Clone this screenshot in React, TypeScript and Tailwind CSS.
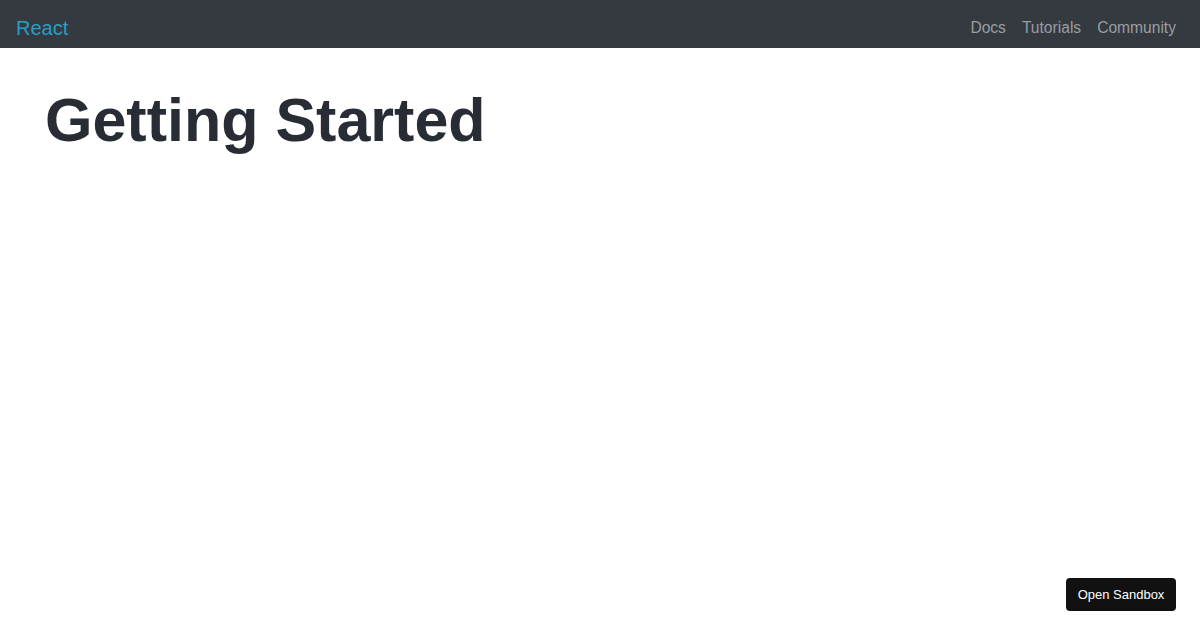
import React from 'react';

const links = ['Docs', 'Tutorials', 'Community'];

export default function App() {
  return (
    <div className="min-h-screen bg-white" style={{ fontFamily: '"Liberation Sans", Arial, sans-serif' }}>
      {/* Navbar */}
      <nav className="h-12 bg-[#343a40] flex items-center justify-between px-4 pt-2">
        <a href="#" className="text-[20px] text-[#2a9ec2] leading-none">React</a>
        <div className="flex items-center">
          {links.map((l) => (
            <a key={l} href="#" className="px-2 text-[15.6px] text-[#9a9da1] leading-none">
              {l}
            </a>
          ))}
        </div>
      </nav>

      <main className="px-[45px] pt-[34px]">
        <h1 className="text-[61px] font-bold text-[#282c34] leading-tight">Getting Started</h1>
      </main>

      <button className="fixed right-6 bottom-[19px] w-[110px] h-[33px] rounded bg-[#111111] text-white text-[13px]">
        Open Sandbox
      </button>
    </div>
  );
}
